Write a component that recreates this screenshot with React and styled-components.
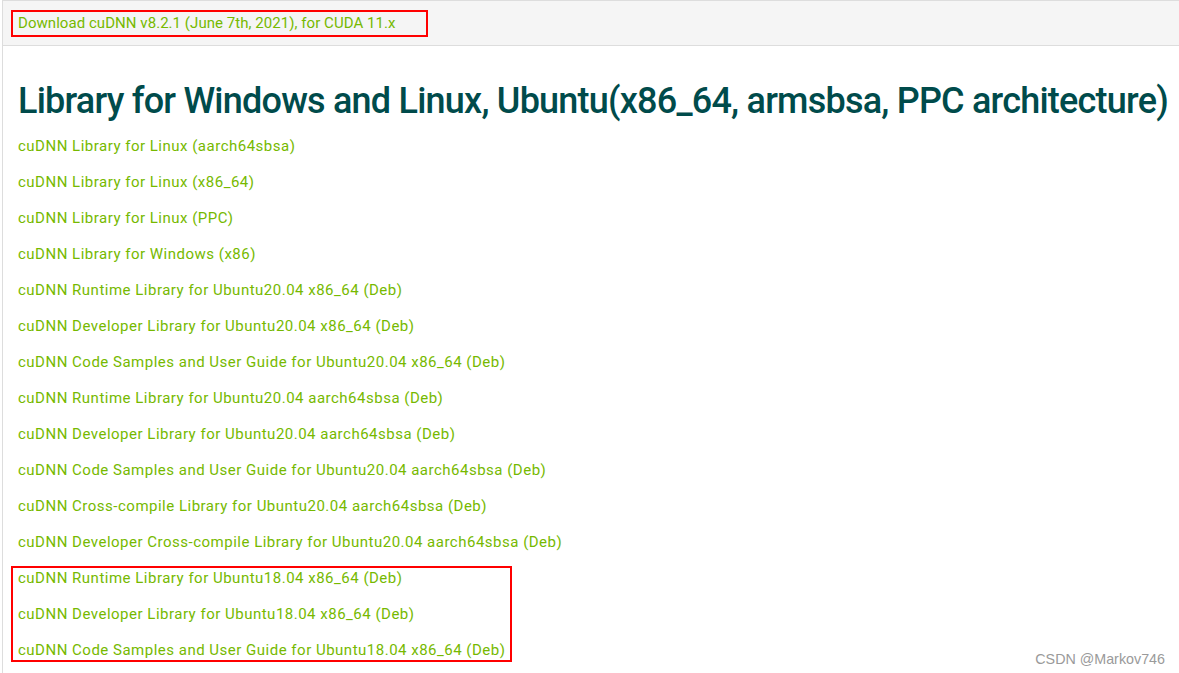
import styled, { createGlobalStyle } from "styled-components";

const GlobalStyle = createGlobalStyle`
    html, body {
        margin: 0;
        padding: 0;
        background: #ffffff;
    }
    body {
        font-family: Roboto, "Liberation Sans", sans-serif;
    }
`

const Page = styled.div`
    position: relative;
    width: 1177px;
    height: 673px;
    margin-left: 2px;
    border-left: 1px solid #dddddd;
    overflow: hidden;
`

const TopBar = styled.div`
    padding: 9px 0 8px 8px;
    background: #f5f5f5;
    border-top: 1px solid #dddddd;
    border-bottom: 1px solid #dddddd;
`

const Highlight = styled.div`
    display: ${({ $inline }) => ($inline ? "inline-flex" : "flex")};
    flex-direction: column;
    gap: 16px;
    width: ${({ $width }) => $width};
    box-sizing: border-box;
    padding: 0 5px;
    margin: ${({ $margin }) => $margin || "0"};
    border: 2px solid #ff0000;
`

const Content = styled.div`
    padding-left: 15px;
`

const Heading = styled.h1`
    margin: 33px 0 13px 0;
    height: 44px;
    line-height: 44px;
    font-size: 36px;
    font-weight: 500;
    letter-spacing: -0.78px;
    color: #004b4b;
    white-space: nowrap;
`

const LinkList = styled.div`
    display: flex;
    flex-direction: column;
    gap: 16px;
`

const DownloadLink = styled.a`
    display: block;
    height: ${({ $tall }) => ($tall ? "23px" : "20px")};
    line-height: ${({ $tall }) => ($tall ? "23px" : "20px")};
    font-size: 15px;
    letter-spacing: ${({ $tall }) => ($tall ? "0.05px" : "0.5px")};
    color: #76b900;
    text-decoration: none;
    white-space: nowrap;
    cursor: pointer;
`

const Watermark = styled.div`
    position: absolute;
    right: 15px;
    bottom: 6px;
    font-family: "Liberation Sans", Arial, sans-serif;
    font-size: 14.3px;
    color: #9a9a9a;
`

const links = [
    "cuDNN Library for Linux (aarch64sbsa)",
    "cuDNN Library for Linux (x86_64)",
    "cuDNN Library for Linux (PPC)",
    "cuDNN Library for Windows (x86)",
    "cuDNN Runtime Library for Ubuntu20.04 x86_64 (Deb)",
    "cuDNN Developer Library for Ubuntu20.04 x86_64 (Deb)",
    "cuDNN Code Samples and User Guide for Ubuntu20.04 x86_64 (Deb)",
    "cuDNN Runtime Library for Ubuntu20.04 aarch64sbsa (Deb)",
    "cuDNN Developer Library for Ubuntu20.04 aarch64sbsa (Deb)",
    "cuDNN Code Samples and User Guide for Ubuntu20.04 aarch64sbsa (Deb)",
    "cuDNN Cross-compile Library for Ubuntu20.04 aarch64sbsa (Deb)",
    "cuDNN Developer Cross-compile Library for Ubuntu20.04 aarch64sbsa (Deb)",
];

// the three Ubuntu 18.04 packages boxed in red
const marked = [
    "cuDNN Runtime Library for Ubuntu18.04 x86_64 (Deb)",
    "cuDNN Developer Library for Ubuntu18.04 x86_64 (Deb)",
    "cuDNN Code Samples and User Guide for Ubuntu18.04 x86_64 (Deb)",
];

function App(){
    return <>
        <GlobalStyle />
        <Page>
            <TopBar>
                <Highlight $width="417px" $inline>
                    <DownloadLink $tall>Download cuDNN v8.2.1 (June 7th, 2021), for CUDA 11.x</DownloadLink>
                </Highlight>
            </TopBar>

            <Content>
                <Heading>Library for Windows and Linux, Ubuntu(x86_64, armsbsa, PPC architecture)</Heading>

                <LinkList>
                    {links.map(text => <DownloadLink key={text}>{text}</DownloadLink>)}
                    <Highlight $width="501px" $margin="-2px 0 0 -7px">
                        {marked.map(text => <DownloadLink key={text}>{text}</DownloadLink>)}
                    </Highlight>
                </LinkList>
            </Content>

            <Watermark>CSDN @Markov746</Watermark>
        </Page>
    </>
}

export default App;
